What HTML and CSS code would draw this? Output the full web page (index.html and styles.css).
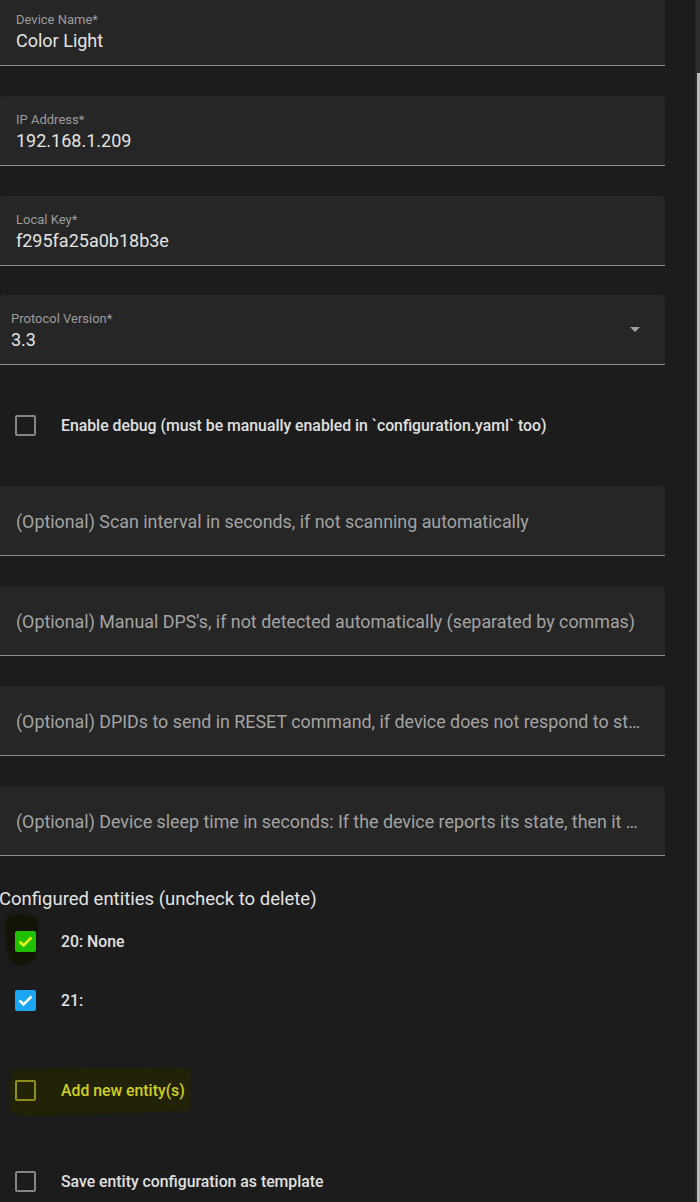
FILE: index.html
```html
<!DOCTYPE html>
<html lang="en">
<head>
    <meta charset="UTF-8">
    <meta name="viewport" content="width=device-width, initial-scale=1.0">
    <title>Device Options</title>
    <link rel="stylesheet" href="styles.css">
</head>
<body>

    <div class="page">
        <main class="form">
            <div class="field">
                <span class="label">Device Name*</span>
                <span class="value">Color Light</span>
            </div>
            <div class="field">
                <span class="label">IP Address*</span>
                <span class="value">192.168.1.209</span>
            </div>
            <div class="field">
                <span class="label">Local Key*</span>
                <span class="value">f295fa25a0b18b3e</span>
            </div>
            <div class="field select">
                <div class="select-text">
                    <span class="label">Protocol Version*</span>
                    <span class="value">3.3</span>
                </div>
                <span class="arrow"></span>
            </div>

            <div class="check-row debug">
                <span class="box"></span>
                <span class="check-label">Enable debug (must be manually enabled in `configuration.yaml` too)</span>
            </div>

            <div class="field empty">
                <span class="hint">(Optional) Scan interval in seconds, if not scanning automatically</span>
            </div>
            <div class="field empty">
                <span class="hint">(Optional) Manual DPS's, if not detected automatically (separated by commas)</span>
            </div>
            <div class="field empty">
                <span class="hint">(Optional) DPIDs to send in RESET command, if device does not respond to status requests</span>
            </div>
            <div class="field empty">
                <span class="hint">(Optional) Device sleep time in seconds: If the device reports its state, then it should not be marked unavailable</span>
            </div>

            <h2 class="section-title">Configured entities (uncheck to delete)</h2>

            <div class="entities">
                <div class="check-row">
                    <svg class="marker" width="40" height="56" viewBox="0 0 40 56">
                        <path d="M7 3 C14 -1 30 0 37 4 C39 16 38 30 36 42 C33 50 22 52 14 50 C8 46 6 36 6 24 C5 14 5 8 7 3 Z" fill="#131306"/>
                    </svg>
                    <span class="box checked green">
                        <svg width="21" height="21" viewBox="0 0 21 21"><polyline points="4.5,10.5 8.5,14.5 16.5,6.5" fill="none" stroke="#e4f21c" stroke-width="2.6"/></svg>
                    </span>
                    <span class="check-label">20: None</span>
                </div>
                <div class="check-row">
                    <span class="box checked blue">
                        <svg width="21" height="21" viewBox="0 0 21 21"><polyline points="4.5,10.5 8.5,14.5 16.5,6.5" fill="none" stroke="#fff" stroke-width="2.6"/></svg>
                    </span>
                    <span class="check-label">21:</span>
                </div>
            </div>

            <div class="check-row option marked">
                <svg class="marker wide" width="190" height="52" viewBox="0 0 190 52">
                    <path d="M12 2 C60 0 140 -1 192 1 L192 43 C150 44 90 46 40 48 C28 49 16 47 11 45 C9 30 10 14 12 2 Z" fill="#222207"/>
                </svg>
                <span class="box"></span>
                <span class="check-label">Add new entity(s)</span>
            </div>
            <div class="check-row option">
                <span class="box"></span>
                <span class="check-label">Save entity configuration as template</span>
            </div>
        </main>

        <div class="scrollbar">
            <div class="thumb"></div>
        </div>
    </div>

</body>
</html>
```

FILE: styles.css
```css
/* Dark options form */
* {
    box-sizing: border-box;
}

body {
    margin: 0;
    background-color: #1c1c1c;
    font-family: Roboto, "Noto Sans", sans-serif;
    color: #e1e1e1;
    height: 1202px;
    overflow: hidden;
}

.page {
    display: flex;
    height: 1202px;
}

.form {
    width: 665px;
    margin-right: 30px;
    margin-top: -4px;
    display: flex;
    flex-direction: column;
}

/* Text fields */
.field {
    height: 70px;
    flex-shrink: 0;
    display: flex;
    flex-direction: column;
    padding: 16px 16px 0;
    margin-bottom: 30px;
    background-color: #262626;
    border-bottom: 1px solid #8d8d8d;
    border-radius: 4px 4px 0 0;
}

.label {
    font-size: 13px;
    line-height: 16px;
    color: #9c9c9c;
}

.value {
    margin-top: 2px;
    font-size: 18px;
    line-height: 22px;
    color: #e3e3e3;
}

.select {
    flex-direction: row;
    align-items: flex-start;
    padding-left: 11px;
    margin-top: -1px;
}

.select-text {
    display: flex;
    flex-direction: column;
}

.arrow {
    margin-left: auto;
    margin-right: 9px;
    margin-top: 16px;
    border-left: 5px solid transparent;
    border-right: 5px solid transparent;
    border-top: 5px solid #a0a0a0;
}

.empty {
    padding-top: 25px;
    padding-right: 24px;
}

.hint {
    font-size: 17.85px;
    line-height: 22px;
    color: #a3a3a3;
    white-space: nowrap;
    overflow: hidden;
    text-overflow: ellipsis;
}

/* Checkbox rows */
.check-row {
    position: relative;
    height: 40px;
    flex-shrink: 0;
    display: flex;
    align-items: center;
    gap: 25px;
    padding-left: 15px;
}

.debug {
    height: 60px;
    margin-bottom: 31px;
}

.box {
    position: relative;
    z-index: 1;
    width: 21px;
    height: 21px;
    flex-shrink: 0;
    border: 2px solid #858585;
    border-radius: 2px;
}

.box svg {
    display: block;
    margin: -2px;
}

.box.checked.green {
    background-color: #20bf00;
    border-color: #20bf00;
}

.box.checked.blue {
    background-color: #1aa6f2;
    border-color: #1aa6f2;
}

.check-label {
    position: relative;
    z-index: 1;
    font-size: 15.8px;
    font-weight: 500;
    color: #e0e0e0;
}

.section-title {
    margin: 0 0 0 -1px;
    font-size: 18.5px;
    line-height: 26px;
    font-weight: 400;
    color: #e3e3e3;
}

.entities {
    display: flex;
    flex-direction: column;
    gap: 19px;
    margin-top: 9px;
}

.option {
    margin-top: 50px;
}

.option + .option {
    margin-top: 51px;
}

/* Highlighter strokes behind some rows */
.marker {
    position: absolute;
    left: 0;
    top: -7px;
    filter: blur(1px);
}

.marker.wide {
    top: -2px;
}

.marked .box {
    border-color: #8e8e1c;
}

.marked .check-label {
    color: #cfd01f;
}

/* Scrollbar */
.scrollbar {
    width: 5px;
    display: flex;
    flex-direction: column;
    background-color: #2d2d2d;
    border-left: 1px solid #262626;
}

.thumb {
    flex: 1;
    margin-top: 73px;
    margin-left: 1px;
    background-color: #b9b9b9;
}
```
